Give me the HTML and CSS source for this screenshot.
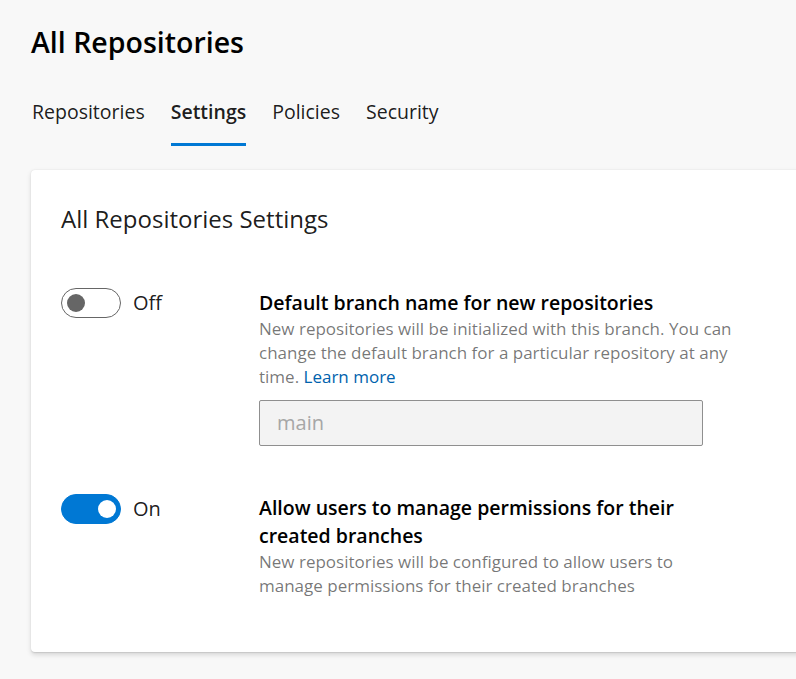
FILE: index.html
```html
<!DOCTYPE html>
<html lang="en">
<head>
<meta charset="utf-8">
<title>All Repositories</title>
<link rel="stylesheet" href="styles.css">
</head>
<body>
<div class="page">
  <h1 class="title">All Repositories</h1>
  <nav class="tabs">
    <a class="tab">Repositories</a>
    <a class="tab active">Settings</a>
    <a class="tab">Policies</a>
    <a class="tab">Security</a>
  </nav>
  <section class="card">
    <h2 class="card-title">All Repositories Settings</h2>
    <div class="setting">
      <div class="toggle-col">
        <span class="toggle off"><span class="knob"></span></span>
        <span class="toggle-label">Off</span>
      </div>
      <div class="setting-body">
        <div class="setting-title">Default branch name for new repositories</div>
        <div class="setting-desc">New repositories will be initialized with this branch. You can change the default branch for a particular repository at any time. <a class="link">Learn more</a></div>
        <div class="input">main</div>
      </div>
    </div>
    <div class="setting second">
      <div class="toggle-col">
        <span class="toggle on"><span class="knob"></span></span>
        <span class="toggle-label">On</span>
      </div>
      <div class="setting-body">
        <div class="setting-title">Allow users to manage permissions for their created branches</div>
        <div class="setting-desc">New repositories will be configured to allow users to manage permissions for their created branches</div>
      </div>
    </div>
  </section>
</div>
</body>
</html>
```
FILE: styles.css
```css
html, body {
  margin: 0;
  padding: 0;
}
body {
  background: #f8f8f8;
  font-family: "Open Sans", "Noto Sans", sans-serif;
  color: rgba(0, 0, 0, 0.9);
  overflow: hidden;
  height: 679px;
}
.page {
  padding-left: 31px;
}
.title {
  margin: 0;
  padding-top: 20px;
  font-size: 28.5px;
  line-height: 44px;
  font-weight: 600;
  color: #000;
}
.tabs {
  display: flex;
  gap: 26px;
  margin-top: 32px;
  padding-left: 1px;
}
.tab {
  font-size: 19.5px;
  line-height: 31px;
  padding-bottom: 16px;
  border-bottom: 3px solid transparent;
  color: rgba(0, 0, 0, 0.9);
}
.tab.active {
  font-weight: 600;
  border-bottom-color: #0078d4;
}
.card {
  margin-top: 24px;
  width: 800px;
  background: #fff;
  border-radius: 4px;
  box-shadow: 0 2.4px 5.4px rgba(0, 0, 0, 0.13), 0 0.5px 1.4px rgba(0, 0, 0, 0.11);
  padding: 33px 30px 54px;
}
.card-title {
  margin: 0 0 53px;
  font-size: 24px;
  line-height: 32px;
  font-weight: 400;
}
.setting {
  display: flex;
  align-items: flex-start;
}
.setting.second {
  margin-top: 48px;
}
.toggle-col {
  width: 198px;
  flex: none;
  display: flex;
  align-items: center;
}
.toggle {
  box-sizing: border-box;
  width: 60px;
  height: 30px;
  border-radius: 15px;
  display: flex;
  align-items: center;
  padding: 0 4.5px;
}
.toggle.off {
  border: 1.5px solid #666;
  background: #fff;
}
.toggle.on {
  border: 1.5px solid #0078d4;
  background: #0078d4;
  justify-content: flex-end;
}
.knob {
  width: 18px;
  height: 18px;
  border-radius: 50%;
}
.off .knob {
  background: #666;
}
.on .knob {
  background: #fff;
}
.toggle-label {
  margin-left: 12px;
  font-size: 20px;
  line-height: 30px;
}
.setting-body {
  width: 480px;
  padding-top: 0.5px;
}
.setting-title {
  font-size: 19.5px;
  line-height: 28px;
  font-weight: 600;
  color: #000;
}
.setting-desc {
  font-size: 17px;
  line-height: 24px;
  color: rgba(0, 0, 0, 0.55);
}
.link {
  color: #0062ad;
}
.input {
  box-sizing: border-box;
  margin-top: 11px;
  width: 444px;
  height: 46px;
  border: 1px solid #8f8f8f;
  border-radius: 2px;
  background: #f3f3f3;
  padding: 0 17px;
  font-size: 20px;
  line-height: 44px;
  color: #a6a6a6;
}
```
